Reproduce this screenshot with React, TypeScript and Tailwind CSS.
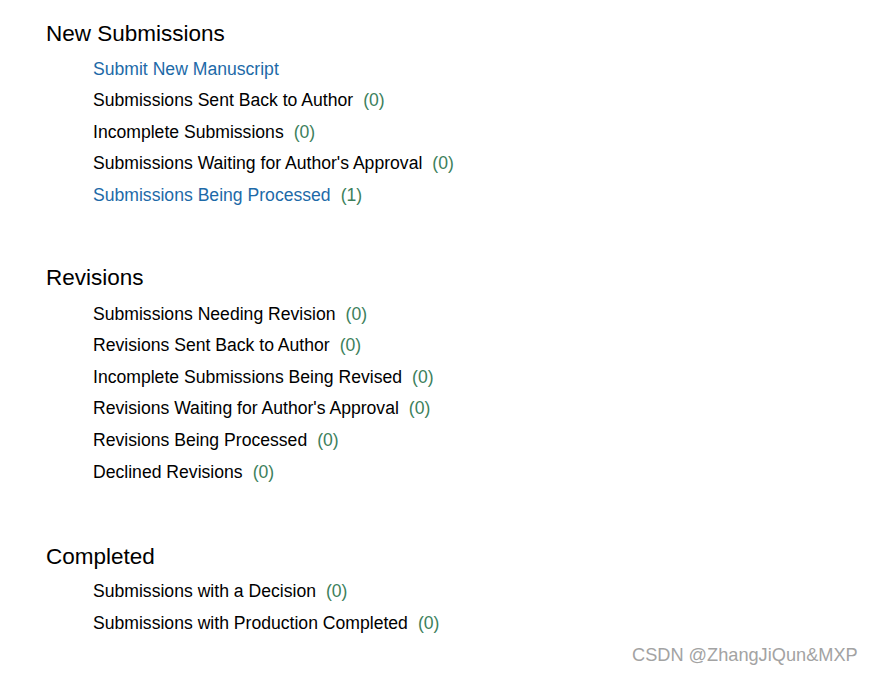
import React from "react";

type Item = { label: string; count?: number; link?: boolean };

type Section = { title: string; items: Item[]; gap: string; listGap: string };

const sections: Section[] = [
  {
    title: "New Submissions",
    gap: "mt-0",
    listGap: "mt-[6px]",
    items: [
      { label: "Submit New Manuscript", link: true },
      { label: "Submissions Sent Back to Author", count: 0 },
      { label: "Incomplete Submissions", count: 0 },
      { label: "Submissions Waiting for Author's Approval", count: 0 },
      { label: "Submissions Being Processed", count: 1, link: true },
    ],
  },
  {
    title: "Revisions",
    gap: "mt-[54px]",
    listGap: "mt-[7px]",
    items: [
      { label: "Submissions Needing Revision", count: 0 },
      { label: "Revisions Sent Back to Author", count: 0 },
      { label: "Incomplete Submissions Being Revised", count: 0 },
      { label: "Revisions Waiting for Author's Approval", count: 0 },
      { label: "Revisions Being Processed", count: 0 },
      { label: "Declined Revisions", count: 0 },
    ],
  },
  {
    title: "Completed",
    gap: "mt-[56px]",
    listGap: "mt-[6px]",
    items: [
      { label: "Submissions with a Decision", count: 0 },
      { label: "Submissions with Production Completed", count: 0 },
    ],
  },
];

export default function App() {
  return (
    <div className="relative w-[872px] h-[675px] bg-white overflow-hidden font-['Liberation_Sans',Arial,sans-serif]">
      <div className="pt-[21px] pl-[46px]">
        {sections.map((section) => (
          <div key={section.title} className={section.gap}>
            <h2 className="h-[26px] leading-[26px] text-[22.5px] text-black">
              {section.title}
            </h2>
            <ul className={`${section.listGap} pl-[47px]`}>
              {section.items.map((item) => (
                <li
                  key={item.label}
                  className="h-[31.6px] flex items-center text-[17.6px]"
                >
                  <span
                    className={item.link ? "text-[#1d6aa8]" : "text-black"}
                  >
                    {item.label}
                  </span>
                  {item.count !== undefined && (
                    <span className="ml-[10px] text-[#3d7f5c]">
                      ({item.count})
                    </span>
                  )}
                </li>
              ))}
            </ul>
          </div>
        ))}
      </div>

      {/* watermark */}
      <div className="absolute left-[632px] top-[644px] text-[18.2px] leading-[22px] text-[#a3a3a3] [text-shadow:1px_1px_0_#fff]">
        CSDN @ZhangJiQun&amp;MXP
      </div>
    </div>
  );
}
